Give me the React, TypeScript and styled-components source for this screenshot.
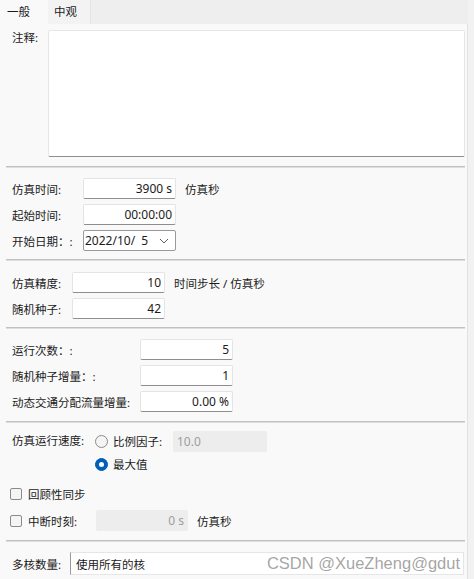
import styled, { createGlobalStyle } from "styled-components";

const GlobalStyle = createGlobalStyle`
  html, body {
    margin: 0;
    padding: 0;
    background: #f2f2f2;
  }
  body {
    font-family: "Noto Sans", "Noto Sans CJK SC", sans-serif;
    font-size: 11.5px;
    color: #1b1b1b;
  }
`;

const Window = styled.div`
  width: 474px;
  height: 579px;
  overflow: hidden;
  background: #f2f2f2;
`;

const TabBar = styled.div`
  display: flex;
  width: 468px;
  height: 24px;
  background: #eeeeee;
`;

const Tab = styled.div<{ $active?: boolean }>`
  box-sizing: border-box;
  width: ${({ $active }) => ($active ? 48 : 43)}px;
  padding-left: ${({ $active }) => ($active ? 7 : 6)}px;
  line-height: 22px;
  background: ${({ $active }) => ($active ? "#f9f9f9" : "#f3f3f3")};
  border-right: ${({ $active }) => ($active ? "none" : "1px solid #e3e3e3")};
  font-family: "Noto Sans CJK SC", sans-serif;
`;

const Panel = styled.div`
  box-sizing: border-box;
  width: 468px;
  padding: 0 2px 0 6px;
  background: #f9f9f9;
  border-right: 1px solid #e2e2e2;
`;

const Section = styled.div<{ $top: number; $bottom: number; $gap?: number }>`
  display: flex;
  flex-direction: column;
  gap: ${({ $gap }) => $gap ?? 5}px;
  padding: ${({ $top }) => $top}px 0 ${({ $bottom }) => $bottom}px;
`;

const Separator = styled.div`
  height: 0;
  border-top: 1px solid #c1c1c1;
  border-bottom: 1px solid #dedede;
`;

const Row = styled.div<{ $align?: "start" | "center" }>`
  display: flex;
  align-items: ${({ $align }) => ($align === "start" ? "flex-start" : "center")};
  padding-left: 6px;
  min-height: 21px;
`;

const Label = styled.div<{ $w: number }>`
  flex: none;
  width: ${({ $w }) => $w}px;
  white-space: nowrap;
  font-family: "Noto Sans", "Noto Sans CJK SC", sans-serif;
`;

const TopLabel = styled(Label)`
  line-height: 14px;
  padding-top: 1px;
`;

const Unit = styled.span`
  margin-left: 9px;
  white-space: nowrap;
`;

const Field = styled.div<{ $w: number; $left?: boolean; $disabled?: boolean }>`
  box-sizing: border-box;
  flex: none;
  width: ${({ $w }) => $w}px;
  height: 21px;
  padding: 0 3px;
  display: flex;
  align-items: center;
  justify-content: ${({ $left }) => ($left ? "flex-start" : "flex-end")};
  background: ${({ $disabled }) => ($disabled ? "#ededed" : "#ffffff")};
  border: 1px solid ${({ $disabled }) => ($disabled ? "#ededed" : "#e4e4e4")};
  border-bottom-color: ${({ $disabled }) => ($disabled ? "#ededed" : "#8e8e8e")};
  border-radius: 2px;
  color: ${({ $disabled }) => ($disabled ? "#9d9d9d" : "#1b1b1b")};
  font-size: 12px;
  white-space: pre;
`;

const Notes = styled.textarea`
  box-sizing: border-box;
  width: 417px;
  height: 127px;
  margin: 0;
  resize: none;
  background: #ffffff;
  border: 1px solid #e6e6e6;
  border-bottom-color: #8e8e8e;
  border-radius: 2px;
  outline: none;
`;

const DateSelect = styled.div`
  box-sizing: border-box;
  width: 93px;
  height: 21px;
  padding: 0 6px 0 1px;
  display: flex;
  align-items: center;
  justify-content: space-between;
  background: #ffffff;
  border: 1px solid #9a9a9a;
  border-radius: 2px;
  font-size: 12px;
  white-space: pre;
`;

const RadioGroup = styled.div`
  display: flex;
  flex-direction: column;
  gap: 2px;
`;

const RadioRow = styled.div<{ $h: number }>`
  display: flex;
  align-items: center;
  height: ${({ $h }) => $h}px;
`;

const Radio = styled.span<{ $checked?: boolean }>`
  box-sizing: border-box;
  flex: none;
  width: 13px;
  height: 13px;
  border-radius: 50%;
  display: flex;
  align-items: center;
  justify-content: center;
  background: ${({ $checked }) => ($checked ? "#005fb8" : "#f4f4f4")};
  border: 1px solid ${({ $checked }) => ($checked ? "#005fb8" : "#8a8a8a")};
  &::after {
    content: "";
    display: ${({ $checked }) => ($checked ? "block" : "none")};
    width: 5px;
    height: 5px;
    border-radius: 50%;
    background: #ffffff;
  }
`;

const OptionText = styled.span<{ $w?: number }>`
  margin-left: 5px;
  width: ${({ $w }) => ($w ? `${$w}px` : "auto")};
  white-space: nowrap;
`;

const Spacer = styled.div<{ $h: number }>`
  height: ${({ $h }) => $h}px;
`;

const CheckRow = styled.div`
  display: flex;
  align-items: center;
  height: 21px;
  padding-left: 4px;
`;

const Check = styled.span`
  box-sizing: border-box;
  flex: none;
  width: 12px;
  height: 12px;
  border: 1px solid #8a8a8a;
  border-radius: 2px;
  background: #f4f4f4;
`;

const CheckText = styled.span<{ $w?: number }>`
  margin-left: 6px;
  width: ${({ $w }) => ($w ? `${$w}px` : "auto")};
  white-space: nowrap;
`;

const CoreSelect = styled.div`
  position: relative;
  box-sizing: border-box;
  flex: 1;
  height: 23px;
  margin-right: 1px;
  padding-left: 5px;
  display: flex;
  align-items: center;
  background: #ffffff;
  border: 1px solid #e6e6e6;
  border-left-color: #9a9a9a;
`;

const Watermark = styled.span`
  position: absolute;
  right: 3px;
  top: 50%;
  transform: translateY(-54%);
  font-family: "Liberation Sans", Arial, sans-serif;
  font-size: 16.5px;
  color: rgba(120, 120, 120, 0.68);
  white-space: nowrap;
  pointer-events: none;
`;

function Chevron() {
  return (
    <svg width="10" height="6" viewBox="0 0 10 6" fill="none">
      <path d="M1 1l4 4 4-4" stroke="#5c5c5c" strokeWidth="1" />
    </svg>
  );
}

export default function App() {
  return (
    <Window>
      <GlobalStyle />
      <TabBar>
        <Tab $active>一般</Tab>
        <Tab>中观</Tab>
      </TabBar>

      <Panel>
        <Section $top={6} $bottom={9}>
          <Row $align="start">
            <TopLabel $w={36}>注释:</TopLabel>
            <Notes readOnly />
          </Row>
        </Section>
        <Separator />

        <Section $top={10} $bottom={8}>
          <Row>
            <Label $w={71}>仿真时间:</Label>
            <Field $w={93}>3900 s</Field>
            <Unit>仿真秒</Unit>
          </Row>
          <Row>
            <Label $w={71}>起始时间:</Label>
            <Field $w={93}>00:00:00</Field>
          </Row>
          <Row>
            <Label $w={71}>开始日期：:</Label>
            <DateSelect>
              <span>2022/10/  5</span>
              <Chevron />
            </DateSelect>
          </Row>
        </Section>
        <Separator />

        <Section $top={11} $bottom={8}>
          <Row>
            <Label $w={60}>仿真精度:</Label>
            <Field $w={93}>10</Field>
            <Unit>时间步长 / 仿真秒</Unit>
          </Row>
          <Row>
            <Label $w={60}>随机种子:</Label>
            <Field $w={93}>42</Field>
          </Row>
        </Section>
        <Separator />

        <Section $top={10} $bottom={9}>
          <Row>
            <Label $w={128}>运行次数：:</Label>
            <Field $w={93}>5</Field>
          </Row>
          <Row>
            <Label $w={128}>随机种子增量：:</Label>
            <Field $w={93}>1</Field>
          </Row>
          <Row>
            <Label $w={128}>动态交通分配流量增量:</Label>
            <Field $w={93}>0.00 %</Field>
          </Row>
        </Section>
        <Separator />

        <Section $top={7} $bottom={9} $gap={0}>
          <Row $align="start">
            <Label $w={83} style={{ lineHeight: "22px" }}>
              仿真运行速度:
            </Label>
            <RadioGroup>
              <RadioRow $h={22}>
                <Radio />
                <OptionText $w={60}>比例因子:</OptionText>
                <Field $w={94} $left $disabled>
                  10.0
                </Field>
              </RadioRow>
              <RadioRow $h={20}>
                <Radio $checked />
                <OptionText>最大值</OptionText>
              </RadioRow>
            </RadioGroup>
          </Row>
          <Spacer $h={9} />
          <CheckRow>
            <Check />
            <CheckText>回顾性同步</CheckText>
          </CheckRow>
          <Spacer $h={6} />
          <CheckRow>
            <Check />
            <CheckText $w={68}>中断时刻:</CheckText>
            <Field $w={92} $disabled>
              0 s
            </Field>
            <Unit>仿真秒</Unit>
          </CheckRow>
        </Section>
        <Separator />

        <Section $top={10} $bottom={4}>
          <Row>
            <Label $w={58}>多核数量:</Label>
            <CoreSelect>
              使用所有的核
              <Watermark>CSDN @XueZheng@gdut</Watermark>
            </CoreSelect>
          </Row>
        </Section>
      </Panel>
    </Window>
  );
}
